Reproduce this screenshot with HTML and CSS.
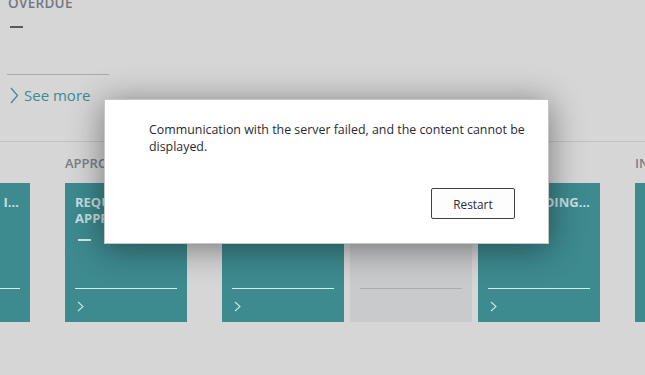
FILE: index.html
```html
<!DOCTYPE html>
<html lang="en">
<head>
<meta charset="utf-8">
<title>Role Center</title>
<link rel="stylesheet" href="styles.css">
</head>
<body>
<div class="page">
  <section class="top">
    <div class="cue">
      <div class="cue-title">OVERDUE</div>
      <div class="cue-dash"></div>
    </div>
    <a class="see-more" href="#">
      <svg class="see-more-chev" width="9" height="17" viewBox="0 0 9 17"><path d="M1 1 L7.5 8.5 L1 16" fill="none" stroke="#3a8c90" stroke-width="1.2"/></svg>
      <span>See more</span>
    </a>
  </section>

  <section class="groups">
    <div class="group">
      <div class="group-title">ACTIVITIES</div>
      <div class="tiles">
        <div class="tile">
          <div class="tile-title one-line">PURCHASES&nbsp;&nbsp;&nbsp;INVOICED</div>
          <div class="tile-dash"></div>
          <div class="tile-foot"><svg width="7" height="11" viewBox="0 0 7 11"><path d="M1 1 L6 5.5 L1 10" fill="none" stroke="#cfe2e4" stroke-width="1.1"/></svg></div>
        </div>
      </div>
    </div>
    <div class="group">
      <div class="group-title">APPROVALS</div>
      <div class="tiles">
        <div class="tile">
          <div class="tile-title">REQUESTS TO APPROVE</div>
          <div class="tile-dash"></div>
          <div class="tile-foot"><svg width="7" height="11" viewBox="0 0 7 11"><path d="M1 1 L6 5.5 L1 10" fill="none" stroke="#cfe2e4" stroke-width="1.1"/></svg></div>
        </div>
      </div>
    </div>
    <div class="group">
      <div class="group-title">DOCUMENTS</div>
      <div class="tiles">
        <div class="tile">
          <div class="tile-title">REQUESTS SENT FOR APPROVAL</div>
          <div class="tile-dash"></div>
          <div class="tile-foot"><svg width="7" height="11" viewBox="0 0 7 11"><path d="M1 1 L6 5.5 L1 10" fill="none" stroke="#cfe2e4" stroke-width="1.1"/></svg></div>
        </div>
        <div class="tile tile-empty">
          <div class="tile-title">&nbsp;</div>
          <div class="tile-foot"></div>
        </div>
        <div class="tile">
          <div class="tile-title one-line">OLD PENDING APPROVAL</div>
          <div class="tile-dash"></div>
          <div class="tile-foot"><svg width="7" height="11" viewBox="0 0 7 11"><path d="M1 1 L6 5.5 L1 10" fill="none" stroke="#cfe2e4" stroke-width="1.1"/></svg></div>
        </div>
      </div>
    </div>
    <div class="group">
      <div class="group-title">INCOMING DOCUMENTS</div>
      <div class="tiles">
        <div class="tile">
          <div class="tile-title">MY INCOMING DOCUMENTS</div>
          <div class="tile-dash"></div>
          <div class="tile-foot"></div>
        </div>
      </div>
    </div>
  </section>
</div>

<div class="dialog" role="dialog">
  <p class="dialog-text">Communication with the server failed, and the content cannot be displayed.</p>
  <div class="dialog-actions">
    <button class="btn" type="button">Restart</button>
  </div>
</div>
</body>
</html>
```

FILE: styles.css
```css
html, body {
  margin: 0;
  padding: 0;
  height: 100%;
  overflow: hidden;
  background: #d6d6d6;
  font-family: "Open Sans", "Noto Sans", sans-serif;
}

.page {
  margin-top: -5px;
}

.top {
  padding-left: 7px;
  padding-bottom: 36px;
  border-bottom: 1px solid #c2c2c2;
}

.cue {
  width: 102px;
  height: 79px;
  box-sizing: content-box;
  border-bottom: 1px solid #ababab;
}

.cue-title {
  font-size: 13.5px;
  line-height: 16px;
  font-weight: 600;
  letter-spacing: 0.3px;
  color: #717782;
  padding-left: 1px;
}

.cue-dash {
  width: 13px;
  height: 2px;
  background: #5a5a5a;
  margin-top: 15px;
  margin-left: 3px;
}

.see-more {
  display: flex;
  align-items: center;
  gap: 5px;
  margin-top: 10px;
  padding-left: 3px;
  color: #3a8c90;
  text-decoration: none;
  font-size: 15px;
  line-height: 20px;
}

.see-more-chev {
  display: block;
}

.groups {
  display: flex;
  gap: 35px;
  margin-left: -92px;
  margin-top: 13px;
}

.group-title {
  font-size: 13px;
  line-height: 16px;
  font-weight: 600;
  color: #797e87;
  white-space: nowrap;
  height: 16px;
  margin-bottom: 12px;
}

.tiles {
  display: flex;
  gap: 6px;
}

.tile {
  width: 122px;
  height: 139px;
  box-sizing: border-box;
  padding: 11px 10px 12px;
  background: #3d8a8f;
  display: flex;
  flex-direction: column;
}

.tile-title {
  font-size: 13px;
  line-height: 16px;
  font-weight: 700;
  color: #c9dfe1;
  height: 32px;
  overflow: hidden;
}

.tile-title.one-line {
  white-space: nowrap;
  text-overflow: ellipsis;
  height: 16px;
}

.tile-title.one-line + .tile-dash {
  margin-top: 29px;
}

.tile-dash {
  width: 13px;
  height: 2px;
  background: #d4e6e8;
  margin-top: 13px;
  margin-left: 3px;
}

.tile-foot {
  margin-top: auto;
  border-top: 1px solid #dbeaec;
  height: 22px;
  box-sizing: border-box;
  padding-top: 12px;
  padding-left: 2px;
}

.tile-foot svg {
  display: block;
}

.tile-empty {
  background: #c9cacc;
}

.tile-empty .tile-foot {
  border-top-color: #abacae;
}

.dialog {
  position: absolute;
  left: 104px;
  top: 99px;
  width: 443px;
  height: 143px;
  background: #ffffff;
  border: 1px solid #c6c6c6;
  box-shadow: 0 4px 32px rgba(0, 0, 0, 0.45);
  display: flex;
  flex-direction: column;
}

.dialog-text {
  margin: 0;
  padding: 21px 16px 0 44px;
  font-size: 12.4px;
  line-height: 17px;
  color: #2b2a33;
}

.dialog-actions {
  display: flex;
  justify-content: flex-end;
  padding-right: 33px;
  margin-top: 33px;
}

.btn {
  width: 84px;
  height: 31px;
  box-sizing: border-box;
  border: 1px solid #3f3f3f;
  border-radius: 2px;
  background: #fdfdfd;
  font-family: "Open Sans", "Noto Sans", sans-serif;
  font-size: 11.8px;
  color: #2b2a33;
  padding: 0;
}
```
